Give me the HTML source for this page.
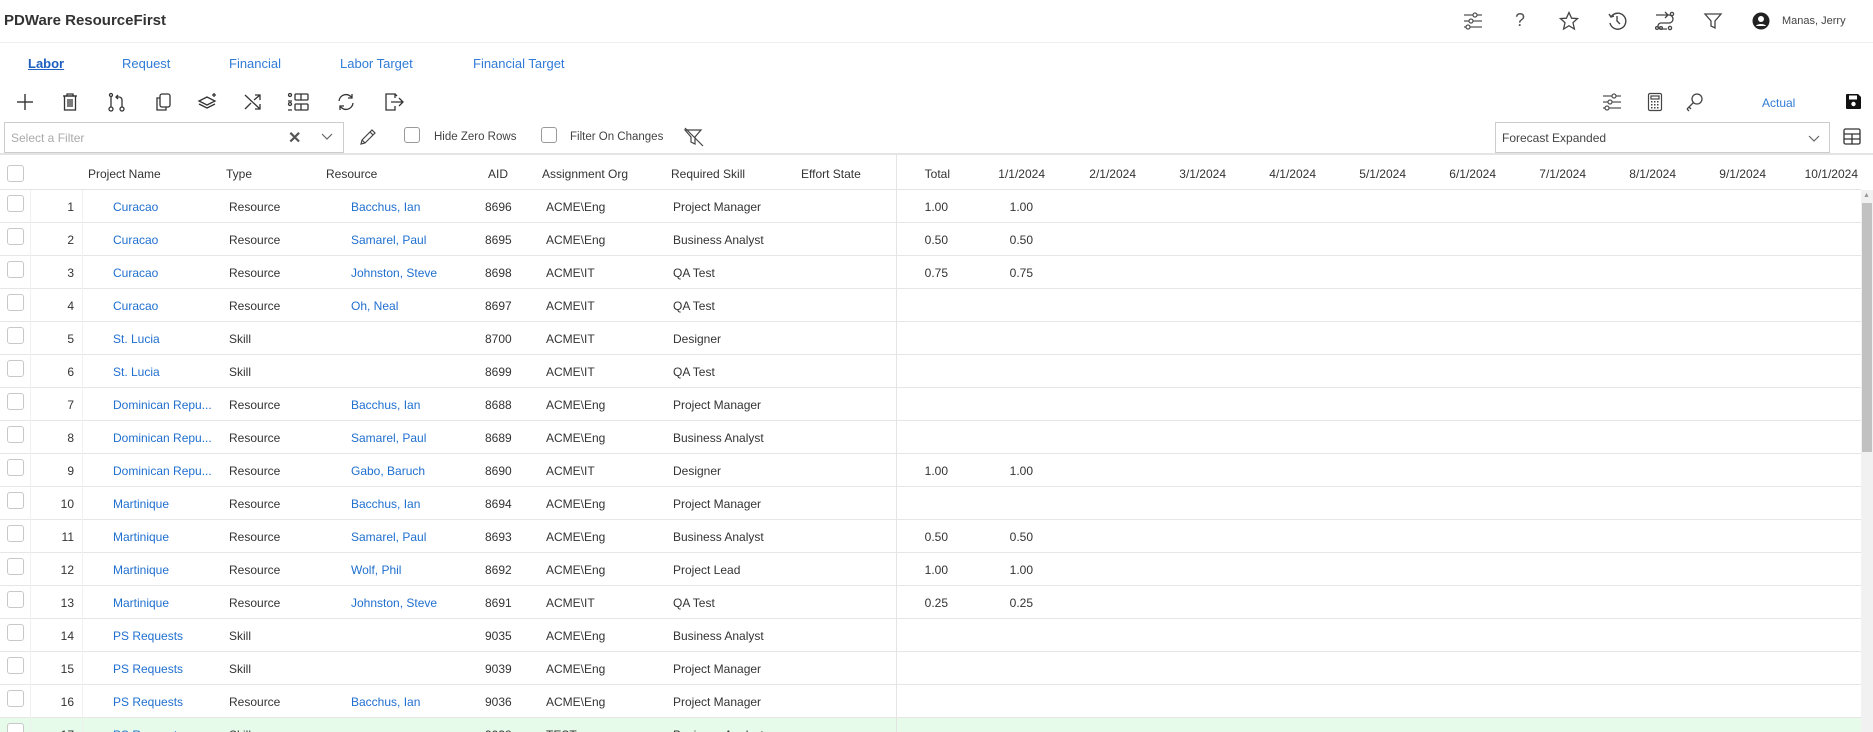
<!DOCTYPE html>
<html style="width:1873px;height:732px;overflow:hidden"><head><meta charset="utf-8"><style>
*{box-sizing:border-box;margin:0;padding:0}
body{width:1873px;height:732px;overflow:hidden;background:#fff;font-family:"Liberation Sans",sans-serif;color:#333;position:relative}
.a{position:absolute;white-space:nowrap}
.ic{position:absolute}
.ic svg{display:block}
.tab{position:absolute;top:56px;font-size:13px;color:#2f7bd6}
.cb{position:absolute;width:16px;height:16px;border:1px solid #9a9a9a;border-radius:3px;background:#fff}
.gcb{position:absolute;width:17px;height:17px;border:1px solid #c8c8c8;border-radius:3px;background:#fff}
.h{position:absolute;top:167px;font-size:12px;color:#333}
.row{position:absolute;left:0;width:1861px;height:33px;border-bottom:1px solid #e6e6e6}
.row span{position:absolute;top:10px;font-size:12px;white-space:nowrap}
.l{color:#1f6fcf}
.r{text-align:right}
#clip{position:absolute;left:0;top:0;width:1873px;height:732px;overflow:hidden}
</style></head><body>
<div id="clip">
<div class="a" style="left:4px;top:12px;font-size:15px;font-weight:bold;color:#333">PDWare ResourceFirst</div>
<div class="a" style="left:0;top:42px;width:1873px;height:1px;background:#eee"></div>

<div class="ic" style="left:1462px;top:11px"><svg width="22" height="20" viewBox="0 0 22 20" fill="none" stroke="#555" stroke-width="1.3"><line x1="2" y1="4" x2="20" y2="4"/><line x1="2" y1="10" x2="20" y2="10"/><line x1="2" y1="16" x2="20" y2="16"/><circle cx="13" cy="4" r="2" fill="#fff"/><circle cx="9" cy="10" r="2" fill="#fff"/><circle cx="6" cy="16" r="2" fill="#fff"/></svg></div>
<div class="a" style="left:1515px;top:10px;font-size:18px;color:#555">?</div>
<div class="ic" style="left:1559px;top:11px"><svg width="20" height="20" viewBox="0 0 20 20" fill="none" stroke="#444" stroke-width="1.3"><polygon points="10,1.5 12.6,7.2 18.5,7.6 14,11.6 15.4,18 10,14.7 4.6,18 6,11.6 1.5,7.6 7.4,7.2"/></svg></div>
<div class="ic" style="left:1607px;top:11px"><svg width="20" height="20" viewBox="0 0 20 20" fill="none" stroke="#444" stroke-width="1.4"><path d="M4 6 A8 8 0 1 1 3 12"/><polyline points="2,3 4,6 7,5"/><polyline points="10,5 10,10 13,13"/></svg></div>
<div class="ic" style="left:1654px;top:11px"><svg width="22" height="20" viewBox="0 0 22 20" fill="none" stroke="#444" stroke-width="1.3"><path d="M2 4 H14 M11 1 L14 4 L11 7"/><circle cx="18" cy="3" r="1.6"/><path d="M14 4 H15 a4 4 0 0 1 0 8 H7 a3 3 0 0 0 0 6 H13"/><circle cx="3" cy="17" r="1.4"/><circle cx="7" cy="17" r="1.4"/><circle cx="16" cy="17" r="1.6"/></svg></div>
<div class="ic" style="left:1703px;top:11px"><svg width="20" height="20" viewBox="0 0 20 20" fill="none" stroke="#444" stroke-width="1.3"><path d="M2 3 H18 L12 10 V17 L8 15 V10 Z"/></svg></div>
<div class="ic" style="left:1752px;top:12px"><svg width="18" height="18" viewBox="0 0 18 18"><circle cx="9" cy="9" r="8.5" fill="#222"/><circle cx="9" cy="7" r="3" fill="#fff"/><path d="M3.8 14 a6 4 0 0 1 10.4 0" fill="#fff"/></svg></div>
<div class="a" style="left:1782px;top:15px;font-size:11px;color:#444">Manas, Jerry</div>

<div class="tab" style="left:28px;color:#1f5fbf;text-decoration:underline;font-weight:bold">Labor</div>
<div class="tab" style="left:122px">Request</div>
<div class="tab" style="left:229px">Financial</div>
<div class="tab" style="left:340px">Labor Target</div>
<div class="tab" style="left:473px">Financial Target</div>

<div class="ic" style="left:15px;top:92px"><svg width="20" height="20" stroke="#333" stroke-width="1.4"><line x1="10" y1="2" x2="10" y2="18"/><line x1="2" y1="10" x2="18" y2="10"/></svg></div>
<div class="ic" style="left:61px;top:92px"><svg width="18" height="20" fill="none" stroke="#333" stroke-width="1.3"><path d="M2 4 H16 M6 4 V2 H12 V4"/><rect x="3.5" y="4" width="11" height="14"/><path d="M7 7 V15 M9 7 V15 M11 7 V15"/></svg></div>
<div class="ic" style="left:107px;top:92px"><svg width="20" height="20" fill="none" stroke="#333" stroke-width="1.3"><circle cx="4" cy="17" r="2"/><circle cx="15" cy="17" r="2"/><circle cx="4" cy="3" r="1.5"/><path d="M4 5 V15 M15 15 V8 a3 3 0 0 0-3-3 H9 M11 3 L9 5 L11 7"/></svg></div>
<div class="ic" style="left:153px;top:92px"><svg width="20" height="20" fill="none" stroke="#333" stroke-width="1.3"><rect x="7" y="2" width="10" height="13" rx="2"/><path d="M7 6 H4 V18 H13 V15"/></svg></div>
<div class="ic" style="left:197px;top:92px"><svg width="22" height="20" fill="none" stroke="#333" stroke-width="1.3"><path d="M10 5 L2 9 L10 13 L18 9 Z"/><path d="M2 12 L10 16 L18 12"/><path d="M17 1 V5 M15 3 H19"/></svg></div>
<div class="ic" style="left:243px;top:92px"><svg width="20" height="20" fill="none" stroke="#333" stroke-width="1.3"><path d="M2 3 L17 17 M2 17 L8 11 M11 8 L17 3 M12 3 H17 V8 M12 17 H17 V12"/></svg></div>
<div class="ic" style="left:287px;top:92px"><svg width="22" height="20" fill="none" stroke="#333" stroke-width="1.3"><circle cx="3" cy="3" r="1.5"/><circle cx="3" cy="12" r="1.5"/><path d="M1 9 H5 M1 18 H5"/><rect x="8" y="2" width="13" height="6" rx="1"/><rect x="8" y="12" width="13" height="6" rx="1"/><path d="M14 2 V8 M14 12 V18"/></svg></div>
<div class="ic" style="left:336px;top:92px"><svg width="20" height="20" fill="none" stroke="#333" stroke-width="1.3"><path d="M3 9 A7 7 0 0 1 16 6 M17 11 A7 7 0 0 1 4 14"/><path d="M16 2 V6 H12 M4 18 V14 H8"/></svg></div>
<div class="ic" style="left:383px;top:92px"><svg width="22" height="20" fill="none" stroke="#333" stroke-width="1.3"><path d="M12 6 V2 H3 V18 H12 V14 M8 10 H20 M16 6 L20 10 L16 14 M12 2 L14 4"/></svg></div>

<div class="ic" style="left:1601px;top:92px"><svg width="22" height="20" fill="none" stroke="#555" stroke-width="1.3"><line x1="2" y1="4" x2="20" y2="4"/><line x1="2" y1="10" x2="20" y2="10"/><line x1="2" y1="16" x2="20" y2="16"/><circle cx="13" cy="4" r="2" fill="#fff"/><circle cx="9" cy="10" r="2" fill="#fff"/><circle cx="6" cy="16" r="2" fill="#fff"/></svg></div>
<div class="ic" style="left:1647px;top:92px"><svg width="16" height="20" fill="none" stroke="#444" stroke-width="1.2"><rect x="1.5" y="1.5" width="13" height="17" rx="1.5"/><rect x="4" y="4" width="8" height="3"/><g fill="#444" stroke="none"><rect x="4" y="9" width="1.5" height="1.5"/><rect x="7" y="9" width="1.5" height="1.5"/><rect x="10" y="9" width="1.5" height="1.5"/><rect x="4" y="12" width="1.5" height="1.5"/><rect x="7" y="12" width="1.5" height="1.5"/><rect x="10" y="12" width="1.5" height="1.5"/><rect x="4" y="15" width="1.5" height="1.5"/><rect x="7" y="15" width="1.5" height="1.5"/><rect x="10" y="15" width="1.5" height="1.5"/></g></svg></div>
<div class="ic" style="left:1684px;top:92px"><svg width="20" height="20" fill="none" stroke="#444" stroke-width="1.3"><circle cx="13" cy="7" r="5"/><path d="M9.5 10.5 L3 17 M5 15 L7 17 M3 17 L5 19"/></svg></div>
<div class="a" style="left:1762px;top:96px;font-size:12px;color:#2f7bd6">Actual</div>
<div class="ic" style="left:1845px;top:93px"><svg width="17" height="17"><path d="M1 2 a1 1 0 0 1 1-1 H13 L16 4 V15 a1 1 0 0 1-1 1 H2 a1 1 0 0 1-1-1 Z" fill="#111"/><rect x="4" y="2.5" width="8" height="4" fill="#fff"/><circle cx="8.5" cy="11" r="2.2" fill="#fff"/></svg></div>

<div class="a" style="left:4px;top:122px;width:340px;height:31px;border:1px solid #ccc;background:#fff"></div>
<div class="a" style="left:11px;top:131px;font-size:12px;color:#aaa">Select a Filter</div>
<div class="a" style="left:288px;top:128px;font-size:16px;font-weight:bold;color:#555">✕</div>
<div class="ic" style="left:321px;top:133px"><svg width="12" height="8" fill="none" stroke="#666" stroke-width="1.2"><path d="M1 1 L6 6 L11 1"/></svg></div>
<div class="ic" style="left:358px;top:127px"><svg width="20" height="20" fill="none" stroke="#444" stroke-width="1.2"><path d="M3 17 L4 13 L14 3 L17 6 L7 16 Z M12 5 L15 8 M4 13 L7 16"/></svg></div>
<div class="cb" style="left:404px;top:127px"></div>
<div class="a" style="left:434px;top:131px;font-size:11.5px;color:#444">Hide Zero Rows</div>
<div class="cb" style="left:541px;top:127px"></div>
<div class="a" style="left:570px;top:131px;font-size:11.5px;color:#444">Filter On Changes</div>
<div class="ic" style="left:683px;top:127px"><svg width="22" height="20" fill="none" stroke="#444" stroke-width="1.2"><path d="M2 3 H18 L12 10 V17 L8 15 V10 Z"/><line x1="2" y1="1" x2="20" y2="19"/></svg></div>
<div class="a" style="left:1495px;top:122px;width:335px;height:31px;border:1px solid #ccc;background:#fff"></div>
<div class="a" style="left:1502px;top:131px;font-size:12px;color:#444">Forecast Expanded</div>
<div class="ic" style="left:1808px;top:135px"><svg width="12" height="8" fill="none" stroke="#666" stroke-width="1.2"><path d="M1 1 L6 6 L11 1"/></svg></div>
<div class="ic" style="left:1843px;top:128px"><svg width="18" height="17" fill="none" stroke="#333" stroke-width="1.3"><rect x="1" y="1" width="16" height="15" rx="1.5"/><path d="M1 6 H17 M1 11 H17 M9 6 V16"/></svg></div>

<div class="a" style="left:0;top:153px;width:1873px;height:2px;background:#e4e4e4"></div>
<div class="a" style="left:0;top:189px;width:1861px;height:1px;background:#e4e4e4"></div>
<div class="a" style="left:896px;top:155px;width:1px;height:577px;background:#e4e4e4;z-index:2"></div>
<div class="a" style="left:30px;top:190px;width:1px;height:542px;background:#f0f0f0;z-index:2"></div>
<div class="a" style="left:82px;top:190px;width:1px;height:542px;background:#f0f0f0;z-index:2"></div>
<div class="gcb" style="left:7px;top:165px"></div>
<div class="h" style="left:88px">Project Name</div>
<div class="h" style="left:226px">Type</div>
<div class="h" style="left:326px">Resource</div>
<div class="h" style="left:488px">AID</div>
<div class="h" style="left:542px">Assignment Org</div>
<div class="h" style="left:671px">Required Skill</div>
<div class="h" style="left:801px">Effort State</div>
<div class="h r" style="left:900px;width:50px">Total</div>
<div class="h r" style="left:985px;width:60px">1/1/2024</div>
<div class="h r" style="left:1076px;width:60px">2/1/2024</div>
<div class="h r" style="left:1166px;width:60px">3/1/2024</div>
<div class="h r" style="left:1256px;width:60px">4/1/2024</div>
<div class="h r" style="left:1346px;width:60px">5/1/2024</div>
<div class="h r" style="left:1436px;width:60px">6/1/2024</div>
<div class="h r" style="left:1526px;width:60px">7/1/2024</div>
<div class="h r" style="left:1616px;width:60px">8/1/2024</div>
<div class="h r" style="left:1706px;width:60px">9/1/2024</div>
<div class="h r" style="left:1788px;width:70px">10/1/2024</div>

<div id="rows"></div>

<div class="a" style="left:1861px;top:190px;width:12px;height:542px;background:#f1f1f1;z-index:3"></div>
<div class="a" style="left:1862px;top:203px;width:10px;height:249px;background:#c1c1c1;z-index:3"></div>
<div class="a" style="left:1863px;top:192px;font-size:7px;color:#999;z-index:3">▲</div>
</div>
<script>
var d=[
["Curacao","Resource","Bacchus, Ian","8696","ACME\\Eng","Project Manager","1.00","1.00"],
["Curacao","Resource","Samarel, Paul","8695","ACME\\Eng","Business Analyst","0.50","0.50"],
["Curacao","Resource","Johnston, Steve","8698","ACME\\IT","QA Test","0.75","0.75"],
["Curacao","Resource","Oh, Neal","8697","ACME\\IT","QA Test","",""],
["St. Lucia","Skill","","8700","ACME\\IT","Designer","",""],
["St. Lucia","Skill","","8699","ACME\\IT","QA Test","",""],
["Dominican Repu...","Resource","Bacchus, Ian","8688","ACME\\Eng","Project Manager","",""],
["Dominican Repu...","Resource","Samarel, Paul","8689","ACME\\Eng","Business Analyst","",""],
["Dominican Repu...","Resource","Gabo, Baruch","8690","ACME\\IT","Designer","1.00","1.00"],
["Martinique","Resource","Bacchus, Ian","8694","ACME\\Eng","Project Manager","",""],
["Martinique","Resource","Samarel, Paul","8693","ACME\\Eng","Business Analyst","0.50","0.50"],
["Martinique","Resource","Wolf, Phil","8692","ACME\\Eng","Project Lead","1.00","1.00"],
["Martinique","Resource","Johnston, Steve","8691","ACME\\IT","QA Test","0.25","0.25"],
["PS Requests","Skill","","9035","ACME\\Eng","Business Analyst","",""],
["PS Requests","Skill","","9039","ACME\\Eng","Project Manager","",""],
["PS Requests","Resource","Bacchus, Ian","9036","ACME\\Eng","Project Manager","",""],
["PS Requests","Skill","","9038","TEST","Business Analyst","",""]];
var h="";
d.forEach(function(r,i){
var top=190+i*33;
h+='<div class="row" style="top:'+top+'px;'+(i==16?'background:#e6fbe9;':'')+'">'+
'<div class="gcb" style="left:7px;top:5px"></div>'+
'<span class="r" style="left:40px;width:34px">'+(i+1)+'</span>'+
'<span class="l" style="left:113px">'+r[0]+'</span>'+
'<span style="left:229px">'+r[1]+'</span>'+
'<span class="l" style="left:351px">'+r[2]+'</span>'+
'<span style="left:485px">'+r[3]+'</span>'+
'<span style="left:546px">'+r[4]+'</span>'+
'<span style="left:673px">'+r[5]+'</span>'+
'<span class="r" style="left:904px;width:44px">'+r[6]+'</span>'+
'<span class="r" style="left:981px;width:52px">'+r[7]+'</span></div>';
});
document.getElementById("rows").innerHTML=h;
</script>
</body></html>
